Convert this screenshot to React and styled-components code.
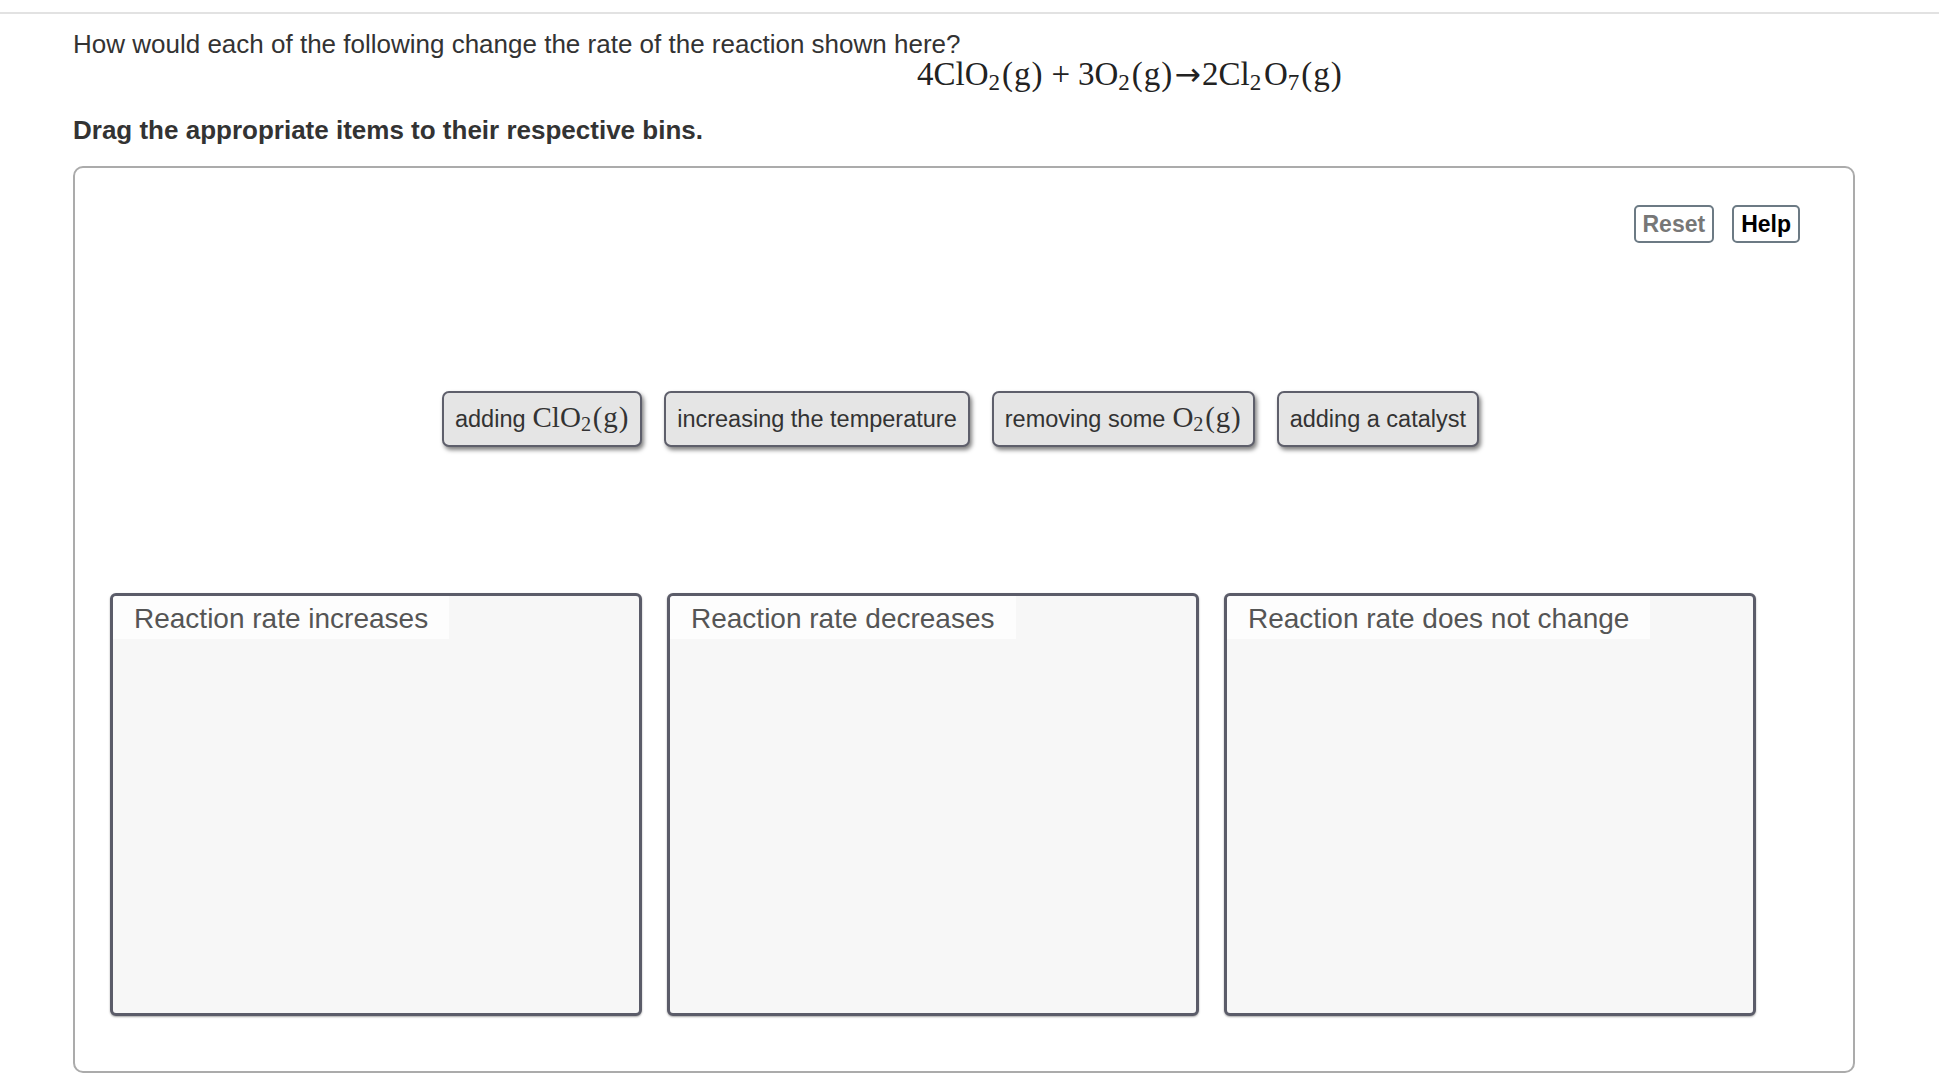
import React from "react";
import styled, { createGlobalStyle } from "styled-components";

const Global = createGlobalStyle`
  html, body { margin: 0; padding: 0; background: #fff; }
  body { font-family: "Liberation Sans", Arial, Helvetica, sans-serif; color: #333; }
`;

const Page = styled.div`
  width: 1939px;
  height: 1078px;
  overflow: hidden;
`;

const TopRule = styled.div`
  margin-top: 12px;
  height: 2px;
  background: #e2e2e2;
`;

const Content = styled.div`
  padding-left: 73px;
`;

const Question = styled.p`
  margin: 15px 0 0;
  font-size: 26px;
  line-height: 30px;
  color: #333;
`;

const Equation = styled.div`
  margin: -3px 0 0 844px;
  font-family: "Liberation Serif", "Times New Roman", serif;
  font-size: 33px;
  line-height: 36px;
  color: #222;
  white-space: nowrap;
`;

const Sub = styled.sub`
  font-size: 0.7em;
  vertical-align: -0.22em;
  line-height: 0;
  margin-right: ${(p) => (p.$gap ? "0.12em" : "0")};
`;

const Paren = styled.span`
  margin-left: 0.06em;
  letter-spacing: 0.03em;
`;

const Op = styled.span`
  margin: 0 0.24em;
`;

const Arrow = styled.span`
  font-family: "DejaVu Sans", sans-serif;
  font-size: 0.95em;
  margin: 0 0.04em;
`;

const Instruction = styled.p`
  margin: 23px 0 0;
  font-size: 26px;
  line-height: 30px;
  font-weight: bold;
  color: #333;
`;

const Board = styled.div`
  margin-top: 21px;
  width: 1782px;
  height: 907px;
  box-sizing: border-box;
  border: 2px solid #ababab;
  border-radius: 10px;
  padding: 37px 53px 0 35px;
`;

const Toolbar = styled.div`
  display: flex;
  justify-content: flex-end;
  gap: 18px;
`;

const ToolButton = styled.button`
  height: 38px;
  box-sizing: border-box;
  padding: 0 7px;
  background: #fff;
  border: 2px solid #6c7a84;
  border-radius: 5px;
  font-family: "Liberation Sans", Arial, sans-serif;
  font-weight: bold;
  font-size: 23px;
  color: ${(p) => (p.$muted ? "#777" : "#000")};
`;

const TokenRow = styled.div`
  margin-top: 148px;
  padding-left: 11px;
  display: flex;
  justify-content: center;
  gap: 22px;
`;

const Token = styled.div`
  height: 56px;
  box-sizing: border-box;
  padding: 0 11px;
  display: flex;
  align-items: center;
  background: #e5e5e5;
  border: 2px solid #5e5f6b;
  border-radius: 7px;
  box-shadow: 2px 3px 4px rgba(0, 0, 0, 0.5);
  font-size: 23.5px;
  color: #333;
  white-space: nowrap;
`;

const Chem = styled.span`
  font-family: "Liberation Serif", "Times New Roman", serif;
  font-size: 29px;
  margin-left: 7px;
  margin-top: -3px;
  color: #333;
`;

const BinRow = styled.div`
  margin-top: 146px;
  display: flex;
  gap: 25px;
`;

const Bin = styled.div`
  width: 532px;
  height: 423px;
  box-sizing: border-box;
  border: 3px solid #5b5c69;
  border-radius: 6px;
  background: #f7f7f7;
  box-shadow: 0 1px 2px rgba(0, 0, 0, 0.35);
`;

const BinLabel = styled.div`
  display: inline-block;
  padding: 2px 21px 0 21px;
  height: 41px;
  line-height: 41px;
  background: #fdfdfd;
  font-size: 28px;
  color: #555;
  border-top-left-radius: 4px;
`;

export default function App() {
  return (
    <Page>
      <Global />
      <TopRule />
      <Content>
        <Question>How would each of the following change the rate of the reaction shown here?</Question>
        <Equation>
          4ClO<Sub>2</Sub>
          <Paren>(g)</Paren>
          <Op>+</Op>
          3O<Sub>2</Sub>
          <Paren>(g)</Paren>
          <Arrow>→</Arrow>
          2Cl<Sub $gap>2</Sub>O<Sub>7</Sub>
          <Paren>(g)</Paren>
        </Equation>
        <Instruction>Drag the appropriate items to their respective bins.</Instruction>
        <Board>
          <Toolbar>
            <ToolButton $muted>Reset</ToolButton>
            <ToolButton>Help</ToolButton>
          </Toolbar>
          <TokenRow>
            <Token>
              adding
              <Chem>
                ClO<Sub>2</Sub>
                <Paren>(g)</Paren>
              </Chem>
            </Token>
            <Token>increasing the temperature</Token>
            <Token>
              removing some
              <Chem>
                O<Sub>2</Sub>
                <Paren>(g)</Paren>
              </Chem>
            </Token>
            <Token>adding a catalyst</Token>
          </TokenRow>
          <BinRow>
            <Bin>
              <BinLabel>Reaction rate increases</BinLabel>
            </Bin>
            <Bin>
              <BinLabel>Reaction rate decreases</BinLabel>
            </Bin>
            <Bin>
              <BinLabel>Reaction rate does not change</BinLabel>
            </Bin>
          </BinRow>
        </Board>
      </Content>
    </Page>
  );
}
